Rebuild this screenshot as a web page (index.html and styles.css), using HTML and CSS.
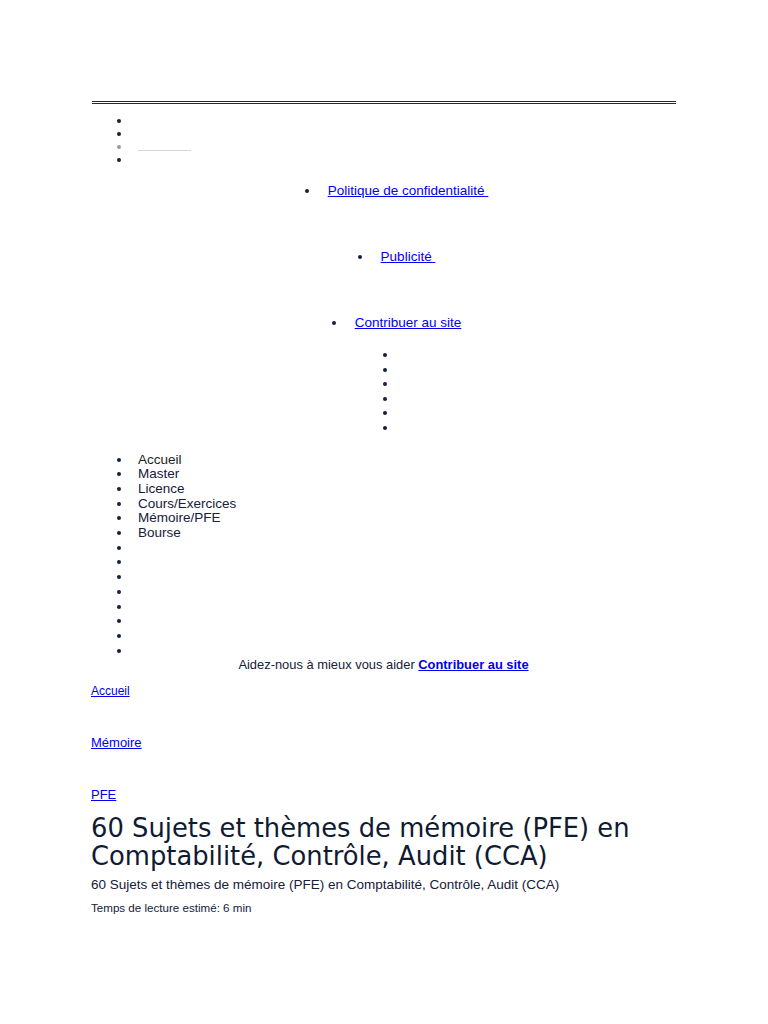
FILE: index.html
```html
<!DOCTYPE html>
<html lang="fr">
<head>
<meta charset="utf-8">
<title>60 Sujets et thèmes de mémoire (PFE) en Comptabilité, Contrôle, Audit (CCA)</title>
<link rel="stylesheet" href="styles.css">
</head>
<body>
<div class="page">
  <div class="topbar"></div>
  <ul class="social">
    <li></li>
    <li></li>
    <li class="muted"><a class="blank" href="#"></a></li>
    <li></li>
  </ul>
  <ul class="menu">
    <li><a href="#">Politique de confidentialité&nbsp;</a></li>
    <li><a href="#">Publicité&nbsp;</a></li>
    <li><a href="#">Contribuer au site</a></li>
  </ul>
  <ul class="icons">
    <li></li><li></li><li></li><li></li><li></li><li></li>
  </ul>
  <ul class="nav">
    <li><span class="first">Accueil</span></li>
    <li><span>Master</span></li>
    <li><span>Licence</span></li>
    <li><span>Cours/Exercices</span></li>
    <li><span>Mémoire/PFE</span></li>
    <li><span>Bourse</span></li>
    <li></li><li></li><li></li><li></li><li></li><li></li><li></li><li></li>
  </ul>
  <p class="help">Aidez-nous à mieux vous aider <a href="#"><strong>Contribuer au site</strong></a></p>
  <div class="crumbs">
    <p class="home"><a href="#">Accueil</a></p>
    <p><a href="#">Mémoire</a></p>
    <p><a href="#">PFE</a></p>
  </div>
  <h1>60 Sujets et thèmes de mémoire (PFE) en Comptabilité, Contrôle, Audit (CCA)</h1>
  <p class="sub">60 Sujets et thèmes de mémoire (PFE) en Comptabilité, Contrôle, Audit (CCA)</p>
  <p class="read">Temps de lecture estimé: 6 min</p>
</div>
</body>
</html>
```

FILE: styles.css
```css
html, body {
  margin: 0;
  padding: 0;
  background: #ffffff;
}

body {
  font-family: "Liberation Sans", Arial, sans-serif;
  font-size: 13.5px;
  color: #15203a;
}

a {
  color: #0000ee;
}

.page {
  width: 585px;
  margin: 0 0 0 91px;
  padding-top: 101px;
}

.topbar {
  border-top: 3px double #2a2a2a;
  margin-left: 1px;
}

ul {
  margin: 0;
  padding-left: 41px;
}

.social {
  margin-top: 10px;
  line-height: 13px;
}

.social .muted {
  color: #9a9a9a;
}

.blank {
  display: inline-block;
  width: 53px;
  height: 0;
  margin-left: 6px;
  border-bottom: 1px solid #d6d6d6;
  vertical-align: baseline;
}

.menu {
  margin-top: 17px;
  line-height: 16px;
}

.menu li {
  width: fit-content;
  margin: 0 auto;
  padding-left: 8px;
}

.menu li + li {
  margin-top: 50px;
}

.icons {
  margin-top: 17px;
  line-height: 14.6px;
  padding-left: 29px;
}

.icons li {
  width: 0;
  height: 14.6px;
  margin: 0 auto;
}

.nav {
  margin-top: 17px;
  line-height: 14.7px;
}

.nav span {
  padding-left: 6px;
}

.nav .first {
  color: #222222;
}

.help {
  margin: 0;
  text-align: center;
  font-size: 12.9px;
  line-height: 14px;
}

.crumbs {
  margin-top: 12px;
  font-size: 13px;
  line-height: 14px;
}

.crumbs .home {
  font-size: 12px;
}

.crumbs p {
  margin: 0 0 38px;
}

.crumbs p:last-child {
  margin-bottom: 0;
}

h1 {
  margin: 12px 0 0;
  font-family: "DejaVu Sans", Verdana, sans-serif;
  font-weight: normal;
  font-size: 25.8px;
  line-height: 28px;
  color: #0f1a33;
}

.sub {
  margin: 7px 0 0;
  line-height: 16px;
}

.read {
  margin: 8px 0 0;
  font-size: 11.6px;
  line-height: 14px;
}
```
